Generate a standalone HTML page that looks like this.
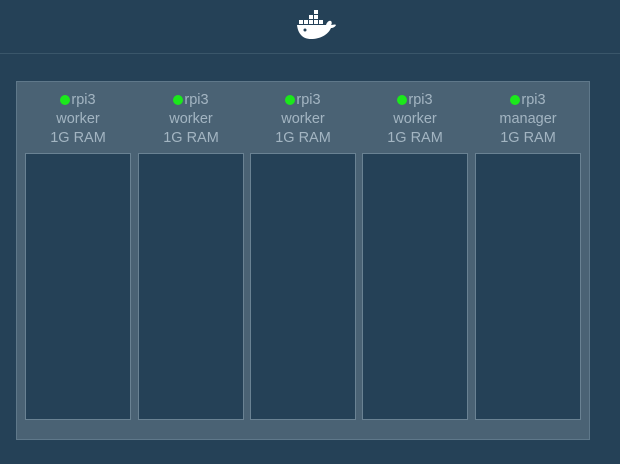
<!DOCTYPE html>
<html><head><style>
html,body{margin:0;padding:0}
body{width:620px;height:464px;background:#254157;font-family:"Liberation Sans",sans-serif;position:relative;overflow:hidden}
.hdr{position:absolute;left:0;top:0;width:620px;height:53px;border-bottom:1px solid #3a566a}
.panel{position:absolute;left:16px;top:81px;width:572px;height:357px;background:#4a6274;border:1px solid #5f788a}
.col{position:absolute;top:0;width:106px;text-align:center;color:#a3b5c2;font-size:14.5px;line-height:19px}
.col .t{position:absolute;top:9px;left:0;width:106px}
.col .box{position:absolute;top:71px;left:0;width:104px;height:265px;background:#254157;border:1px solid #6a8293}
.dot{display:inline-block;width:10px;height:10px;border-radius:50%;background:#1be81b;margin-right:1px;vertical-align:-1px}
</style></head><body>
<div class="hdr">
<svg style="position:absolute;left:296px;top:10px" width="42" height="30" viewBox="0 0 42 30">
<g fill="#fff">
<rect x="18" y="0" width="4" height="4"/>
<rect x="13" y="5" width="4" height="4"/><rect x="18" y="5" width="4" height="4"/>
<rect x="3" y="10" width="4" height="4"/><rect x="8" y="10" width="4" height="4"/><rect x="13" y="10" width="4" height="4"/><rect x="18" y="10" width="4" height="4"/><rect x="23" y="10" width="4" height="4"/>
<path d="M1 15 H30 C31 12 33 10 35 11 C36 12 36 14 35 15 C37 15 39 14 40 15 C39 17 37 18 35 18 C32 25 24 29 15 29 C7 29 2 24 1 15 Z"/>
</g>
<circle cx="9" cy="20" r="1.5" fill="#254157"/>
</svg>
</div>
<div class="panel">
<div class="col" style="left:8px"><div class="t"><span class="dot"></span>rpi3<br>worker<br>1G RAM</div><div class="box"></div></div>
<div class="col" style="left:121px"><div class="t"><span class="dot"></span>rpi3<br>worker<br>1G RAM</div><div class="box"></div></div>
<div class="col" style="left:233px"><div class="t"><span class="dot"></span>rpi3<br>worker<br>1G RAM</div><div class="box"></div></div>
<div class="col" style="left:345px"><div class="t"><span class="dot"></span>rpi3<br>worker<br>1G RAM</div><div class="box"></div></div>
<div class="col" style="left:458px"><div class="t"><span class="dot"></span>rpi3<br>manager<br>1G RAM</div><div class="box"></div></div>
</div>
</body></html>
